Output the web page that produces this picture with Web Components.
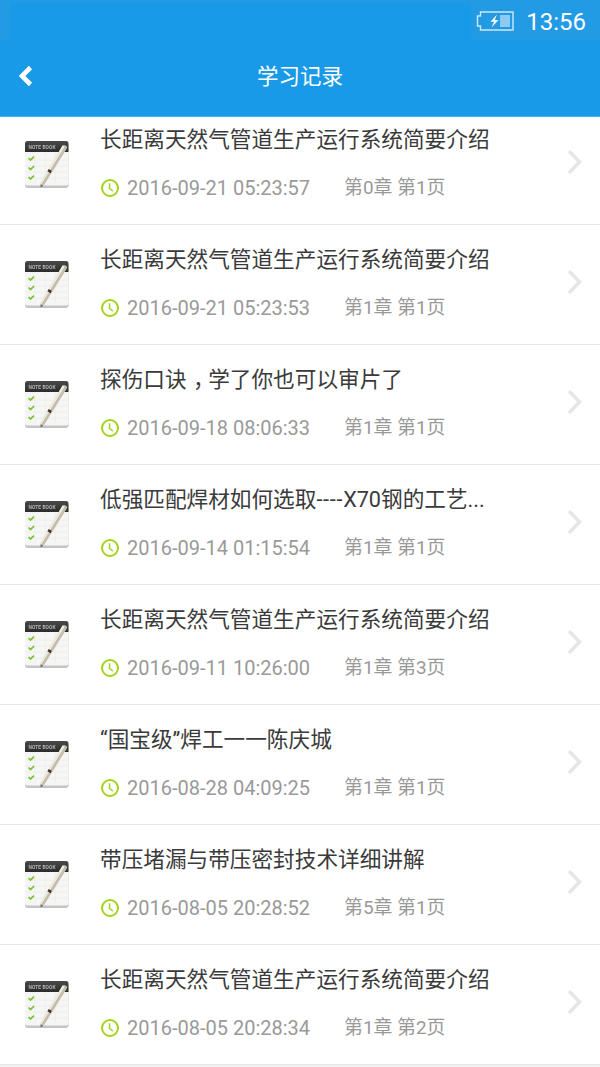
<!DOCTYPE html>
<html lang="zh">
<head>
<meta charset="utf-8">
<title>学习记录</title>
<style>
  html, body { margin: 0; height: 100%; }
  body { background: #f2f2f2; font-family: Roboto, "Noto Sans CJK SC", sans-serif; overflow: hidden; }
  #page { height: 1067px; display: flex; flex-direction: column; overflow: hidden; }
  #list { flex: 1; overflow: hidden; }
  #list-inner { margin-top: -12px; }
  .wide { letter-spacing: .7px; }
  .comma { margin-left: 6.500px; letter-spacing: -6.500px; }
</style>
</head>
<body>
<div id="page">
  <app-header title="学习记录"></app-header>
  <div id="list"><div id="list-inner"></div></div>
</div>

<script>
class StatusBar extends HTMLElement {
  constructor() {
    super();
    this.attachShadow({ mode: "open" });
    this.shadowRoot.innerHTML = `
      <style>
        :host { display: flex; height: 40px; background: #229ae4; padding: 3px 0 0 10px; box-sizing: border-box; }
        .inner { flex: 1; display: flex; justify-content: flex-end; background: #189ae8; }
        .right { display: flex; align-items: center; gap: 12px; padding: 0 14px 0 0; background: #229ae4; height: 37px; }
        .time { color: #fff; font-size: 24px; line-height: 37px; padding-top: 2px; }
        svg { display: block; margin-left: 5px; position: relative; top: -1px; }
      </style>
      <div class="inner">
        <div class="right">
          <svg width="38" height="20" viewBox="0 0 38 20">
            <path d="M4.500 1h32.500v18h-32.500v-4h-3v-10h3z" fill="none" stroke="#cfe8f9" stroke-width="1.400"/>
            <rect x="24" y="4" width="10" height="12" fill="#8cc9f3"/>
            <path d="M21 3.500l-6.500 7.200h3.600l-2.600 5.800 7-7.600h-3.800z" fill="#fff"/>
          </svg>
          <span class="time"><slot></slot></span>
        </div>
      </div>`;
  }
}

class AppHeader extends HTMLElement {
  constructor() {
    super();
    this.attachShadow({ mode: "open" });
  }
  connectedCallback() {
    this.shadowRoot.innerHTML = `
      <style>
        :host { display: block; flex: none; height: 117px; background: #189ae8; position: relative; z-index: 1; box-shadow: inset 0 -1px 0 #4db0ee; }
        .bar { height: 72px; display: grid; grid-template-columns: 60px 1fr 60px; align-items: center; }
        .back { padding-left: 17px; display: flex; }
        h1 { margin: 0 0 4px; text-align: center; color: #fff; font-size: 21.500px; font-weight: 400; }
      </style>
      <status-bar>13:56</status-bar>
      <div class="bar">
        <div class="back">
          <svg width="16" height="22" viewBox="0 0 16 22"><path d="M13.500 2.500L5 11l8.500 8.500" fill="none" stroke="#fff" stroke-width="4.600"/></svg>
        </div>
        <h1>${this.getAttribute("title")}</h1>
        <div></div>
      </div>`;
  }
}

class NoteIcon extends HTMLElement {
  constructor() {
    super();
    this.attachShadow({ mode: "open" });
    this.shadowRoot.innerHTML = `
      <style>:host { display: block; width: 48px; height: 50px; } svg { display: block; filter: blur(.5px); }</style>
      <svg width="48" height="50" viewBox="0 0 48 50">
        <defs>
          <linearGradient id="top" x1="0" y1="0" x2="0" y2="1"><stop offset="0" stop-color="#4a4a4a"/><stop offset="1" stop-color="#2c2c2c"/></linearGradient>
        </defs>
        <rect x="2" y="3" width="43.500" height="45" rx="3" fill="#c4c4c4"/>
        <rect x="2" y="1" width="43.500" height="44.500" rx="2.500" fill="#f6f6f4"/>
        <path d="M2 3.500a2.500 2.500 0 0 1 2.500-2.500h38.500a2.500 2.500 0 0 1 2.500 2.500v8.500h-43.500z" fill="url(#top)"/>
        <path d="M2 20h43M2 26h43M2 32h43M2 38h43M12 12v33M22 12v33M32 12v33" stroke="#ebebe9" stroke-width=".7"/>
        <text x="5.500" y="8.500" font-family="Roboto, sans-serif" font-size="4.800" font-weight="700" fill="#b5b5b5" textLength="27">NOTE BOOK</text>
        <path d="M5.500 18l2 2 3.500-3.300M5.500 27.500l2 2 3.500-3.300M5.500 37l2 2 3.500-3.300" fill="none" stroke="#7cc034" stroke-width="1.700"/>
        <path d="M39.500 5.500q2-1.500 4.500 1 .5 1-.5 2.500L21 45l-3.500 2.500.2-4.500z" fill="#c4bdac"/>
        <path d="M39.500 5.500l2 1.200-23 37.500-1 3.300.2-4.500z" fill="#f0ece2"/>
        <path d="M25.800 29l3.100 1.900-1.400 2.300-3.100-1.900z" fill="#3b3730"/>
        <path d="M17.500 47.500l.1-3.300 2.600 1.500z" fill="#6b675e"/>
      </svg>`;
  }
}

class ClockIcon extends HTMLElement {
  constructor() {
    super();
    this.attachShadow({ mode: "open" });
    this.shadowRoot.innerHTML = `
      <style>:host { display: block; width: 18px; height: 18px; } svg { display: block; }</style>
      <svg width="18" height="18" viewBox="0 0 18 18">
        <circle cx="9" cy="9" r="8" fill="none" stroke="#a2d31d" stroke-width="2"/>
        <path d="M8.500 4.200v5.300l3.400 2.600" fill="none" stroke="#a2d31d" stroke-width="1.500"/>
      </svg>`;
  }
}

class HistoryRow extends HTMLElement {
  constructor() {
    super();
    this.attachShadow({ mode: "open" });
  }
  connectedCallback() {
    const date = this.getAttribute("date");
    const chapter = this.getAttribute("chapter");
    this.shadowRoot.innerHTML = `
      <style>
        :host { display: grid; grid-template-columns: 100px 1fr 46px; height: 120px; box-sizing: border-box; background: #fff; border-bottom: 1px solid #e6e6e6; }
        .icon { padding: 35px 0 0 23px; }
        .body { padding-top: 21px; min-width: 0; }
        .title { font-size: 21.650px; line-height: 28px; color: #3a3a3a; white-space: nowrap; }
        .meta { display: flex; align-items: center; margin-top: 20px; font-size: 20px; line-height: 28px; color: #999; }
        clock-icon { margin: 0 8px 0 1px; }
        .date { width: 217px; flex: none; }
        .chapter { font-size: 18.900px; white-space: nowrap; }
        .arrow { padding: 44px 0 0 12px; }
      </style>
      <div class="icon"><note-icon></note-icon></div>
      <div class="body">
        <div class="title"><slot></slot></div>
        <div class="meta"><clock-icon></clock-icon><span class="date">${date}</span><span class="chapter">${chapter}</span></div>
      </div>
      <div class="arrow">
        <svg width="18" height="26" viewBox="0 0 18 26"><path d="M3 2l10.500 11L3 24" fill="none" stroke="#e6e6e6" stroke-width="3.500"/></svg>
      </div>`;
  }
}

customElements.define("status-bar", StatusBar);
customElements.define("app-header", AppHeader);
customElements.define("note-icon", NoteIcon);
customElements.define("clock-icon", ClockIcon);
customElements.define("history-row", HistoryRow);

const records = [
  ["长距离天然气管道生产运行系统简要介绍", "2016-09-21 05:23:57", "第0章 第1页"],
  ["长距离天然气管道生产运行系统简要介绍", "2016-09-21 05:23:53", "第1章 第1页"],
  ['探伤口诀<span class="comma">，</span>学了你也可以审片了', "2016-09-18 08:06:33", "第1章 第1页"],
  ['低强匹配焊材如何选取<span class="wide">----</span>X70钢的工艺...', "2016-09-14 01:15:54", "第1章 第1页"],
  ["长距离天然气管道生产运行系统简要介绍", "2016-09-11 10:26:00", "第1章 第3页"],
  ["“国宝级”焊工一一陈庆城", "2016-08-28 04:09:25", "第1章 第1页"],
  ["带压堵漏与带压密封技术详细讲解", "2016-08-05 20:28:52", "第5章 第1页"],
  ["长距离天然气管道生产运行系统简要介绍", "2016-08-05 20:28:34", "第1章 第2页"],
];

const list = document.getElementById("list-inner");
records.forEach(([title, date, chapter]) => {
  const row = document.createElement("history-row");
  row.setAttribute("date", date);
  row.setAttribute("chapter", chapter);
  row.innerHTML = title;
  list.appendChild(row);
});
</script>
</body>
</html>
